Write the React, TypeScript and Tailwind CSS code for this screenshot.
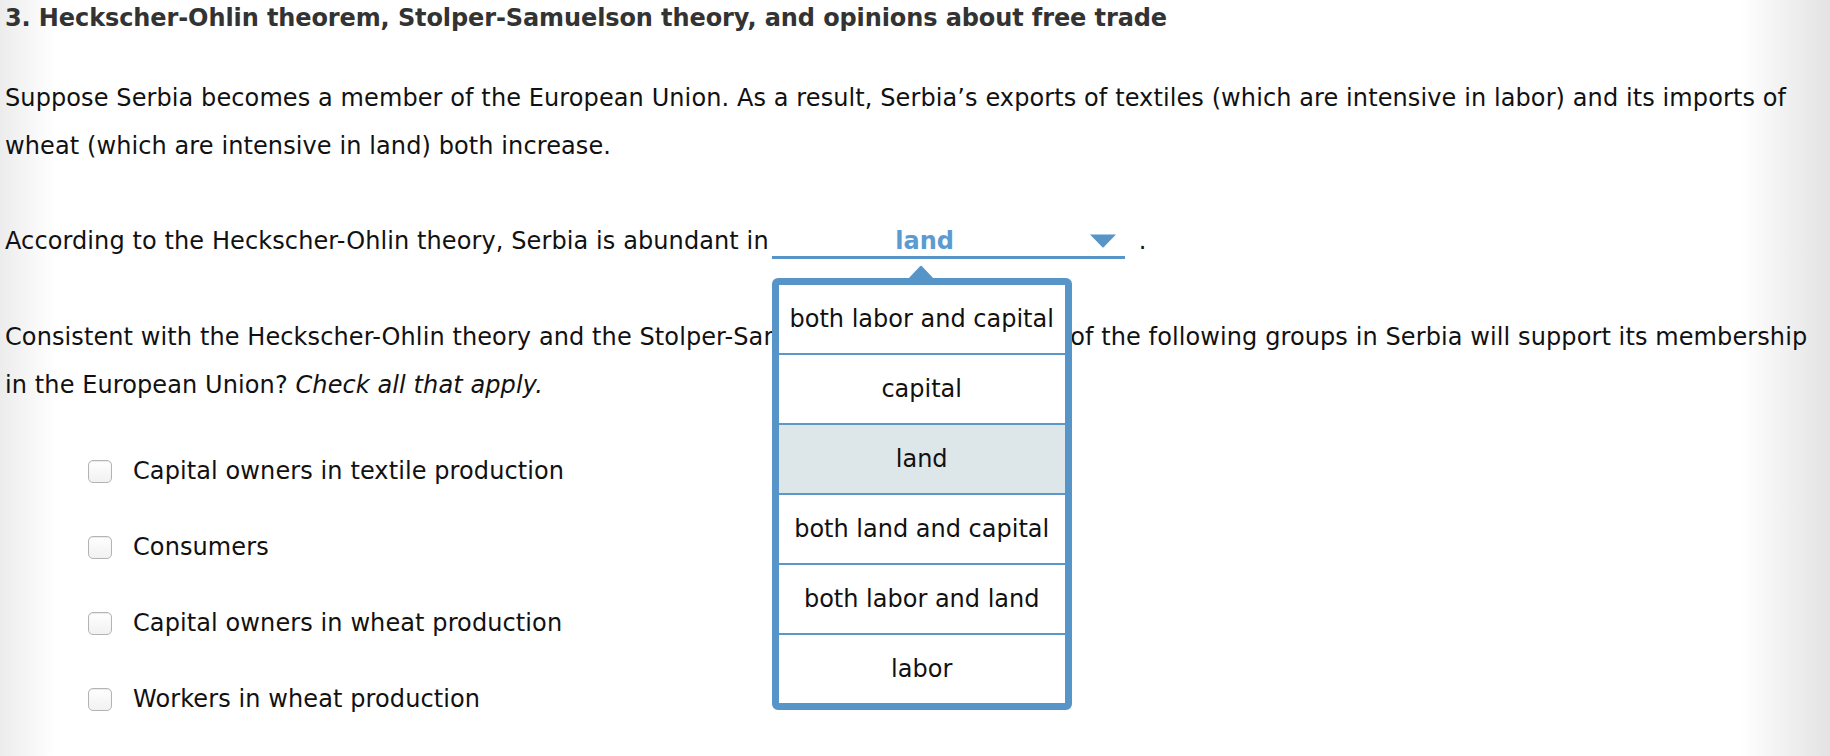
import { useState } from "react";

const options = [
  "both labor and capital",
  "capital",
  "land",
  "both land and capital",
  "both labor and land",
  "labor",
];

const groups = [
  "Capital owners in textile production",
  "Consumers",
  "Capital owners in wheat production",
  "Workers in wheat production",
];

function Dropdown({ value }: { value: string }) {
  return (
    <span className="relative inline-block w-[353px] ml-[3px] border-b-[3px] border-[#5795c9] leading-[30px] align-baseline tracking-normal">
      <span className="block pr-[47px] text-center font-bold text-[#5b9bd2]">
        {value}
      </span>
      <svg
        className="absolute right-[8px] top-[8px]"
        width="28"
        height="14"
        viewBox="0 0 28 14"
      >
        <path d="M1 0.5 H27 L14.6 13.2 Q14 13.8 13.4 13.2 Z" fill="#5795c9" />
      </svg>
      <div className="absolute left-0 top-full mt-[22px] w-[300px] z-10">
        <svg
          className="absolute -top-[13px] left-[136px]"
          width="26"
          height="14"
          viewBox="0 0 26 14"
        >
          <path d="M0 14 L12 1.2 Q13 0.2 14 1.2 L26 14 Z" fill="#5795c9" />
        </svg>
        <div className="rounded-[6px] border-[7px] border-[#5795c9] bg-white overflow-hidden">
          {options.map((o, i) => (
            <div
              key={o}
              className={
                "flex items-center justify-center font-normal text-[#111] leading-[28px] " +
                (i < options.length - 1
                  ? "h-[70px] border-b-2 border-[#5b97c9] "
                  : "h-[68px] ") +
                (o === value ? "bg-[#dde6e9]" : "bg-white")
              }
            >
              {o}
            </div>
          ))}
        </div>
      </div>
    </span>
  );
}

function Check({ label }: { label: string }) {
  const [on, setOn] = useState(false);
  return (
    <label className="flex items-center h-[48px] cursor-pointer">
      <span
        onClick={() => setOn(!on)}
        className="ml-[83px] w-[24px] h-[23px] rounded-[5px] border border-[#b3b3b3] bg-[linear-gradient(#ffffff,#f1f1f1)] shadow-[inset_0_1px_1px_rgba(0,0,0,0.08)]"
      />
      <span className="ml-[21px]">{label}</span>
    </label>
  );
}

export default function App() {
  return (
    <div className="w-[1830px] h-[756px] overflow-hidden bg-[linear-gradient(to_right,#ececec_0px,#ffffff_55px,#ffffff_calc(100%-90px),#e3e3e3_100%)] font-['DejaVu_Sans',Verdana,sans-serif] text-[24px] text-[#111]">
      <div className="pl-[5px]">
        <h1 className="font-bold text-[#333] leading-[36px] whitespace-nowrap tracking-[-0.1px]">
          3. Heckscher-Ohlin theorem, Stolper-Samuelson theory, and opinions
          about free trade
        </h1>

        <div className="mt-[38px] leading-[48px] whitespace-nowrap tracking-[0.1px]">
          <div>
            Suppose Serbia becomes a member of the European Union. As a result,
            Serbia’s exports of textiles (which are intensive in labor) and its
            imports of
          </div>
          <div>wheat (which are intensive in land) both increase.</div>
        </div>

        <div className="mt-[47px] leading-[48px] whitespace-nowrap tracking-[0.1px]">
          According to the Heckscher-Ohlin theory, Serbia is abundant in
          <Dropdown value="land" />
          <span className="ml-[14px]">.</span>
        </div>

        <div className="mt-[48px] leading-[48px] whitespace-nowrap tracking-[0.1px]">
          <div>
            Consistent with the Heckscher-Ohlin theory and the
            Stolper-Samuelson theorem, which of the following groups in Serbia
            will support its membership
          </div>
          <div>
            in the European Union? <i>Check all that apply.</i>
          </div>
        </div>

        <div className="mt-[38px] flex flex-col gap-[28px] tracking-[0.1px]">
          {groups.map((g) => (
            <Check key={g} label={g} />
          ))}
        </div>
      </div>
    </div>
  );
}
